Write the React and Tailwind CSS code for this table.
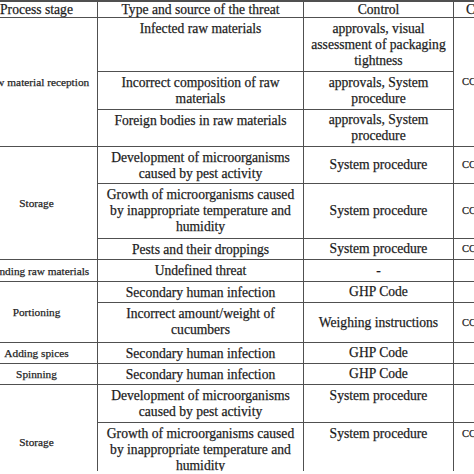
import React from 'react'

const serif = { fontFamily: '"Liberation Serif", "Times New Roman", serif' }

// one grid cell: col decides font/alignment, span is a fixed class string
const Cell = ({ col, span = '', top = false, lines = [] }) => {
  const base = 'bg-white flex flex-col items-center text-center text-[#151515] [-webkit-text-stroke:0.25px_#333]'
  let cls = ''
  if (col === 1) cls = 'justify-center text-[11.3px] leading-[14px]'
  if (col === 2) cls = 'justify-start pt-[3px] text-[13.6px] leading-[16px]'
  if (col === 3) cls = top ? 'justify-start pt-[3px] text-[13.6px] leading-[16px]' : 'justify-center text-[13.6px] leading-[16px]'
  if (col === 4) cls = top ? 'justify-start items-start pt-[5px] pl-[8px] text-[10.5px] leading-[12px]' : 'justify-center items-start pl-[8px] text-[10.5px] leading-[12px]'
  return (
    <div className={`${base} ${cls} ${span} whitespace-nowrap`}>
      {lines.map((l, i) => (
        <span key={i}>{l}</span>
      ))}
    </div>
  )
}

const Head = ({ children, extra = '' }) => (
  <div className={`bg-white flex items-center justify-center text-[13.6px] leading-[15px] text-[#151515] [-webkit-text-stroke:0.25px_#333] whitespace-nowrap ${extra}`}>
    {children}
  </div>
)

const dev = ['Development of microorganisms', 'caused by pest activity']
const growth = ['Growth of microorganisms caused', 'by inappropriate temperature and', 'humidity']
const human = ['Secondary human infection']

export default function App() {
  return (
    <div className="w-[474px] h-[474px] bg-white overflow-hidden" style={serif}>
      <div className="h-[471px] overflow-hidden">
        <div className="ml-[-25px] w-[545px] bg-[#505050] pl-px pt-[2px] grid gap-px grid-cols-[121px_205px_149px_66px] grid-rows-[15px_53px_37px_36px_36px_54px_20px_21px_20px_39px_20px_20px_37px_75px]">
          {/* header */}
          <Head>Process stage</Head>
          <Head>Type and source of the threat</Head>
          <Head>Control</Head>
          <Head extra="justify-start pl-[12px]">CCP</Head>

          {/* raw material reception */}
          <Cell col={1} span="row-span-3" lines={['Raw material reception']} />
          <Cell col={2} lines={['Infected raw materials']} />
          <Cell col={3} lines={['approvals, visual', 'assessment of packaging', 'tightness']} />
          <Cell col={4} span="row-span-3" lines={['CCP']} />
          <Cell col={2} lines={['Incorrect composition of raw', 'materials']} />
          <Cell col={3} lines={['approvals, System', 'procedure']} />
          <Cell col={2} lines={['Foreign bodies in raw materials']} />
          <Cell col={3} lines={['approvals, System', 'procedure']} />

          {/* storage */}
          <Cell col={1} span="row-span-3" lines={['Storage']} />
          <Cell col={2} lines={dev} />
          <Cell col={3} lines={['System procedure']} />
          <Cell col={4} lines={['CCP']} />
          <Cell col={2} lines={growth} />
          <Cell col={3} lines={['System procedure']} />
          <Cell col={4} lines={['CCP']} />
          <Cell col={2} lines={['Pests and their droppings']} />
          <Cell col={3} lines={['System procedure']} />
          <Cell col={4} lines={['CCP']} />

          {/* blending */}
          <Cell col={1} lines={['Blending raw materials']} />
          <Cell col={2} lines={['Undefined threat']} />
          <Cell col={3} lines={['-']} />
          <Cell col={4} />

          {/* portioning */}
          <Cell col={1} span="row-span-2" lines={['Portioning']} />
          <Cell col={2} lines={human} />
          <Cell col={3} lines={['GHP Code']} />
          <Cell col={4} />
          <Cell col={2} lines={['Incorrect amount/weight of', 'cucumbers']} />
          <Cell col={3} lines={['Weighing instructions']} />
          <Cell col={4} lines={['CCP']} />

          {/* spices, spinning */}
          <Cell col={1} lines={['Adding spices']} />
          <Cell col={2} lines={human} />
          <Cell col={3} lines={['GHP Code']} />
          <Cell col={4} />
          <Cell col={1} lines={['Spinning']} />
          <Cell col={2} lines={human} />
          <Cell col={3} lines={['GHP Code']} />
          <Cell col={4} />

          {/* storage again */}
          <Cell col={1} span="row-span-2" lines={['Storage']} />
          <Cell col={2} lines={dev} />
          <Cell col={3} top lines={['System procedure']} />
          <Cell col={4} />
          <Cell col={2} lines={growth} />
          <Cell col={3} top lines={['System procedure']} />
          <Cell col={4} top lines={['CCP']} />
        </div>
      </div>
    </div>
  )
}
